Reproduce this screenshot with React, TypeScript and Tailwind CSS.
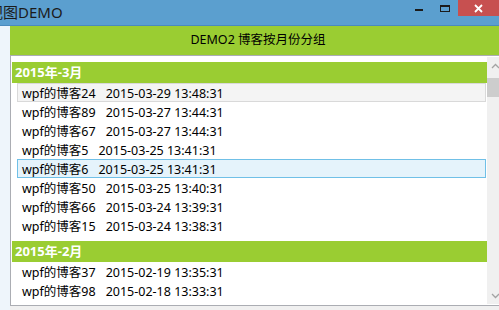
import React from 'react';

type Post = { name: string; time: string; state?: 'selected' | 'hover' };

const groups: { title: string; posts: Post[] }[] = [
  {
    title: '2015年-3月',
    posts: [
      { name: 'wpf的博客24', time: '2015-03-29 13:48:31', state: 'selected' },
      { name: 'wpf的博客89', time: '2015-03-27 13:44:31' },
      { name: 'wpf的博客67', time: '2015-03-27 13:44:31' },
      { name: 'wpf的博客5', time: '2015-03-25 13:41:31' },
      { name: 'wpf的博客6', time: '2015-03-25 13:41:31', state: 'hover' },
      { name: 'wpf的博客50', time: '2015-03-25 13:40:31' },
      { name: 'wpf的博客66', time: '2015-03-24 13:39:31' },
      { name: 'wpf的博客15', time: '2015-03-24 13:38:31' },
    ],
  },
  {
    title: '2015年-2月',
    posts: [
      { name: 'wpf的博客37', time: '2015-02-19 13:35:31' },
      { name: 'wpf的博客98', time: '2015-02-18 13:33:31' },
    ],
  },
];

const font = "font-['Noto_Sans','Noto_Sans_CJK_SC',sans-serif]";

const Row = ({ post }: { post: Post }) => {
  const look =
    post.state === 'selected'
      ? 'bg-[#f4f4f4] border-[#d9d9d9]'
      : post.state === 'hover'
        ? 'bg-[#e5f3fb] border-[#70c0e7]'
        : 'border-transparent';
  return (
    <div className={`ml-[5px] mr-[1px] h-[19px] flex items-center border pl-[4px] pt-[1px] text-[12.5px] leading-[17px] text-black ${look}`}>
      <span>{post.name}</span>
      <span className="ml-[10px]">{post.time}</span>
    </div>
  );
};

const Chevron = ({ up }: { up?: boolean }) => (
  <svg width="9" height="6" viewBox="0 0 9 6" className="block">
    <path d={up ? 'M1 5 L4.5 1.5 L8 5' : 'M1 1 L4.5 4.5 L8 1'} fill="none" stroke="#a3a3a3" strokeWidth="1.3" />
  </svg>
);

export default function App() {
  return (
    <div className={`w-[499px] h-[310px] overflow-hidden bg-[#f0f0f0] flex flex-col ${font}`}>
      {/* title bar */}
      <div className="h-[26px] shrink-0 bg-[#5b9fcf] border-b border-[#4b8abd] flex items-start relative">
        <span className="ml-[-12px] mt-[2px] text-[15px] leading-[20px] text-[#1b1b1b]">视图DEMO</span>
        <div className="ml-auto flex items-start">
          <div className="w-[26px] h-[16px] flex items-center justify-center">
            <div className="w-[8px] h-[2px] bg-[#1b1b1b] mt-[3px]" />
          </div>
          <div className="w-[26px] h-[16px] flex items-center justify-center">
            <div className="w-[10px] h-[7px] border border-t-2 border-[#1b1b1b]" />
          </div>
          <div className="w-[41px] h-[16px] bg-[#c75050] flex items-center justify-center">
            <svg width="9" height="9" viewBox="0 0 9 9">
              <path d="M1 1 L8 8 M8 1 L1 8" stroke="#fff" strokeWidth="1.8" />
            </svg>
          </div>
        </div>
      </div>

      <div className="flex flex-1">
        <div className="w-[10px] shrink-0 bg-[#eef5fb]" />
        <div className="flex-1 flex flex-col items-start">
          <div className="w-full h-[29px] bg-[#9acd32] flex items-center justify-center text-[12.5px] text-black">
            DEMO2 博客按月份分组
          </div>
          <div className="w-[496px] h-[251px] shrink-0 border border-[#abadb3] bg-white p-[1px] flex">
            <div className="flex-1 pt-[5px] flex flex-col">
              {groups.map((g) => (
                <div key={g.title} className="mb-[6px]">
                  <div className="h-[21px] bg-[#9acd32] flex items-center pl-[3px] text-[13px] font-bold text-white">
                    {g.title}
                  </div>
                  {g.posts.map((p) => (
                    <Row key={p.name} post={p} />
                  ))}
                </div>
              ))}
            </div>
            <div className="w-[17px] shrink-0 bg-[#f0f0f0] flex flex-col">
              <div className="h-[17px] flex items-center justify-center">
                <Chevron up />
              </div>
              <div className="mt-[4px] h-[19px] bg-[#cdcdcd]" />
              <div className="mt-auto h-[17px] flex items-center justify-center">
                <Chevron />
              </div>
            </div>
          </div>
        </div>
      </div>
    </div>
  );
}
